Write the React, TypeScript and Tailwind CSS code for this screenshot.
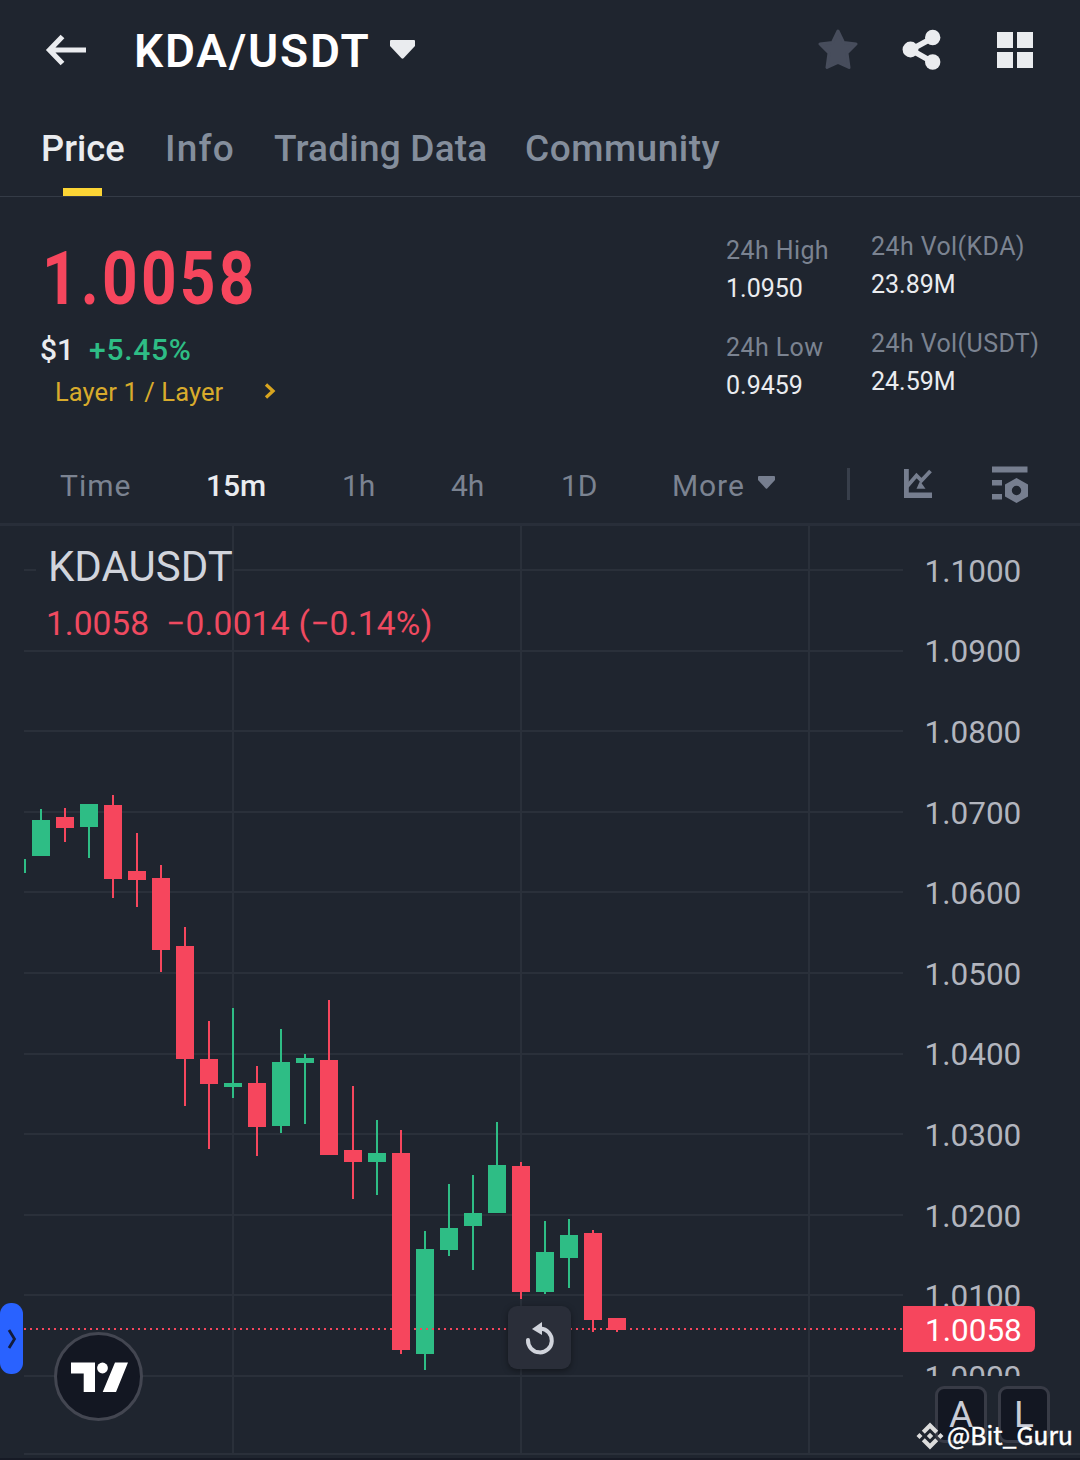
import React from "react";

type Candle = { x: number; high: number; top: number; bottom: number; low: number; up: boolean };

const UP = "#2ebd85";
const DOWN = "#f6465d";

const raw: [number, number, number, number, 0 | 1][] = [
  [809, 820, 856, 856, 1],
  [808, 817, 828, 842, 0],
  [804, 804, 827, 858, 1],
  [795, 805, 879, 898, 0],
  [833, 871, 880, 907, 0],
  [865, 878, 950, 972, 0],
  [927, 946, 1059, 1106, 0],
  [1021, 1059, 1084, 1149, 0],
  [1008, 1083, 1087, 1098, 1],
  [1066, 1083, 1127, 1156, 0],
  [1029, 1062, 1126, 1133, 1],
  [1054, 1058, 1063, 1124, 1],
  [1000, 1060, 1155, 1155, 0],
  [1086, 1150, 1162, 1199, 0],
  [1120, 1153, 1162, 1195, 1],
  [1130, 1153, 1350, 1354, 0],
  [1231, 1249, 1354, 1370, 1],
  [1184, 1228, 1250, 1256, 1],
  [1175, 1213, 1226, 1270, 1],
  [1122, 1165, 1213, 1213, 1],
  [1162, 1166, 1292, 1299, 0],
  [1221, 1252, 1292, 1294, 1],
  [1219, 1235, 1258, 1288, 1],
  [1230, 1233, 1320, 1332, 0],
  [1318, 1318, 1330, 1332, 0],
];

const candles: Candle[] = raw.map(([high, top, bottom, low, up], i) => ({
  x: 41 + i * 24,
  high,
  top,
  bottom,
  low,
  up: up === 1,
}));

// grid line y, label baseline y, label
const levels: [number, number, string][] = [
  [570, 582, "1.1000"],
  [651, 662, "1.0900"],
  [731, 743, "1.0800"],
  [812, 824, "1.0700"],
  [892, 904, "1.0600"],
  [973, 985, "1.0500"],
  [1054, 1065, "1.0400"],
  [1134, 1146, "1.0300"],
  [1215, 1227, "1.0200"],
  [1295, 1307, "1.0100"],
  [1376, 1388, "1.0000"],
];

function Header() {
  return (
    <header className="flex h-[100px] items-center pl-[45px] pr-[47px]">
      <svg width="42" height="34" viewBox="45 33 42 34" fill="none" stroke="#eaecef" strokeWidth="5.2">
        <path d="M86 50H49.5M62.5 36.500L49.500 50L62.5 63.500" />
      </svg>
      <h1 className="ml-[47px] w-[256px] whitespace-nowrap pt-0.5 text-[46px] font-semibold leading-[60px] tracking-[1.8px] text-white">
        KDA/USDT
      </h1>
      <svg width="25" height="19" viewBox="390 40 25 19" className="-mt-px" fill="#eaecef">
        <path d="M391 40H414Q415 40 415 41V46L403.500 58.300Q402.500 59 401.500 58.300L390 46V41Q390 40 391 40Z" />
      </svg>
      <div className="ml-auto flex items-center">
        <svg width="40" height="42" viewBox="818 29 40 42" fill="#474d5c" stroke="#474d5c" strokeWidth="3" strokeLinejoin="round">
          <path d="M838 31L843.500 42.500L856 44L847 53L849 67.500L838 62.500L827 67.500L829 53L820 44L832.500 42.500Z" />
        </svg>
        <svg width="40" height="42" viewBox="901 29 40 42" className="ml-[43px]" fill="#eaecef" stroke="#eaecef">
          <path d="M909.500 50.500L932.500 38M909.500 49L932.500 62" strokeWidth="5.500" />
          <g stroke="none">
            <circle cx="910.500" cy="49.500" r="7.900" />
            <circle cx="932.700" cy="37.500" r="7.700" />
            <circle cx="932.700" cy="62" r="7.700" />
          </g>
        </svg>
        <svg width="36" height="36" viewBox="0 0 36 36" className="ml-[56px]" fill="#eaecef">
          <path d="M0 0H16V16H0ZM20 0H36V16H20ZM0 20H16V36H0ZM20 20H36V36H20Z" />
        </svg>
      </div>
    </header>
  );
}

function Tabs() {
  return (
    <nav className="flex h-[97px] items-start whitespace-nowrap border-b border-[#343b46] pl-[41px] text-[37px] font-medium leading-[97px] text-[#848e9c]">
      <div className="relative w-[124px] text-[#eaecef]">
        <span className="inline-block origin-left scale-x-[.98]">Price</span>
        <span className="absolute left-[22px] top-[88px] h-2 w-[39px] bg-[#fcd535]" />
      </div>
      <div className="w-[109px] tracking-[1.2px]">Info</div>
      <div className="w-[251px] tracking-[0.2px]">Trading Data</div>
      <div className="tracking-[0.5px]">Community</div>
    </nav>
  );
}

function Stat({ label, value }: { label: string; value: string }) {
  return (
    <div className="h-[97px] whitespace-nowrap text-[25px] leading-[38px]">
      <div className="tracking-[0.4px] text-[#7b8391]">{label}</div>
      <div className="text-[#eaecef]">{value}</div>
    </div>
  );
}

function Summary() {
  return (
    <section className="flex h-[251px] justify-between">
      <div className="pl-10">
        <div className="h-[132px] whitespace-nowrap pt-[41px] text-[74.500px] font-bold leading-[81px] tracking-[3.8px] text-[#f6465d]">
          <span className="inline-block origin-left translate-x-[2px] scale-x-[.835]">1.0058</span>
        </div>
        <div className="flex h-[42px] gap-[15px] whitespace-nowrap text-[30px] font-medium leading-[42px]">
          <span className="text-[#eaecef]">$1</span>
          <span className="tracking-[0.7px] text-[#2ebd85]">+5.45%</span>
        </div>
        <div className="flex h-[42px] items-center whitespace-nowrap pl-[15px] text-[25.500px] leading-[42px] tracking-[0.1px] text-[#d8ab2c]">
          <span className="w-[209px]">Layer 1 / Layer</span>
          <svg width="12" height="16" viewBox="0 0 12 16" className="-mt-0.5" fill="none" stroke="#d8a51f" strokeWidth="3.300">
            <path d="M2 1.500L9 8L2 14.500" />
          </svg>
        </div>
      </div>
      <div className="flex">
        <div className="w-[145px] pt-[35px]">
          <Stat label="24h High" value="1.0950" />
          <Stat label="24h Low" value="0.9459" />
        </div>
        <div className="w-[209px] pt-[31px]">
          <Stat label="24h Vol(KDA)" value="23.89M" />
          <Stat label="24h Vol(USDT)" value="24.59M" />
        </div>
      </div>
    </section>
  );
}

function Intervals() {
  return (
    <div className="flex h-[78px] items-start whitespace-nowrap border-b-[3px] border-[#282e39] pl-[60px] text-[30px] leading-[76px] text-[#7b8391]">
      <div className="w-[146px] tracking-[1px]">Time</div>
      <div className="w-[136px] font-medium text-[#eaecef]">15m</div>
      <div className="w-[109px]">1h</div>
      <div className="w-[110px]">4h</div>
      <div className="w-[111px]">1D</div>
      <div className="w-[86px] tracking-[0.9px]">More</div>
      <svg width="17" height="14" viewBox="0 0 17 14" className="mt-[28px]" fill="#767e8f">
        <path d="M1 0H16Q17 0 17 1V4L9.200 12.500Q8.500 13.200 7.800 12.500L0 4V1Q0 0 1 0Z" />
      </svg>
      <span className="ml-[72px] mt-[20px] h-8 w-[3px] bg-[#383f4b]" />
      <svg width="29" height="30" viewBox="904 469 29 30" className="ml-[54px] mt-[21px]" fill="#767e8f">
        <path d="M904 469H908.800V492.500H932V498H904Z" />
        <path d="M907 486.500L916.500 475.500L921.500 480.500L930.500 471" fill="none" stroke="#767e8f" strokeWidth="3.800" />
        <path d="M920 481L925.500 488.800H916.500Z" />
      </svg>
      <svg width="37" height="38" viewBox="992 466 37 38" className="ml-[59px] mt-[18px]" fill="#767e8f">
        <path d="M992 466.500H1027.500V472.500H992ZM992 480H1002V485.500H992ZM992 494H1002V499.500H992Z" />
        <path fillRule="evenodd" d="M1016.500 478L1028 484.500V496.500L1016.500 503L1005 496.500V484.500ZM1016.500 485.800A4.700 4.700 0 1 0 1016.500 495.200A4.700 4.700 0 1 0 1016.500 485.800Z" />
      </svg>
    </div>
  );
}

function Chart() {
  return (
    <section className="relative h-[934px] w-[1080px] overflow-hidden">
      <svg width="1080" height="934" viewBox="0 526 1080 934" className="block" shapeRendering="crispEdges">
        {[233, 521, 809].map((x) => (
          <rect key={x} x={x - 1} y="526" width="2" height="928" fill="#2a303a" />
        ))}
        {levels.map(([y]) => (
          <rect key={y} x="24" y={y - 1} width="879" height="2" fill="#2a303a" />
        ))}
        <rect x="24" y="1453" width="1056" height="2" fill="#2a303a" />
        <rect x="0" y="1458" width="1080" height="2" fill="#161a25" />
        <rect x="36" y="560" width="196" height="20" fill="#1f252f" />
        <rect x="24" y="859" width="2" height="14" fill={UP} />
        {candles.map((c) => (
          <g key={c.x} fill={c.up ? UP : DOWN}>
            <rect x={c.x - 1} y={c.high} width="2" height={c.low - c.high} />
            <rect x={c.x - 9} y={c.top} width="18" height={c.bottom - c.top} />
          </g>
        ))}
        <path d="M24 1329H903" stroke={DOWN} strokeWidth="2" strokeDasharray="2 4" />
        <g fontSize="31.500" fill="#b2b5be">
          {levels.map(([, base, label]) => (
            <text key={label} x="924.500" y={base}>{label}</text>
          ))}
        </g>
        <rect x="905" y="1376" width="175" height="60" fill="#1f252f" />
        <path d="M903 1306H1029Q1035 1306 1035 1312V1346Q1035 1352 1029 1352H903Z" fill={DOWN} shapeRendering="auto" />
        <text x="925" y="1341" fontSize="31.500" fill="#fff">1.0058</text>
      </svg>

      <div className="absolute left-[47px] top-[14px] whitespace-nowrap">
        <div className="pl-px text-[42px] leading-[54px] text-[#d1d4dc]">KDAUSDT</div>
        <div className="-ml-px flex gap-[17px] text-[33.500px] leading-[60px] text-[#ef4a60]">
          <span>1.0058</span>
          <span className="tracking-[0.25px]">−0.0014 (−0.14%)</span>
        </div>
      </div>

      <div className="absolute left-0 top-[777px] flex h-[71px] w-[23px] items-center justify-center rounded-[11px] bg-[#2962ff]">
        <svg width="10" height="20" viewBox="0 0 10 20" fill="none" stroke="#131c3c" strokeWidth="2.800">
          <path d="M2 1L7.500 10L2 19" />
        </svg>
      </div>

      <div className="absolute left-[54px] top-[806px] flex size-[89px] items-center justify-center rounded-full border-[3px] border-[#434651] bg-[#131722]">
        <svg width="58" height="31" viewBox="70 1363 58 31" className="mt-0.5" fill="#fff">
          <path d="M71 1363.500H95V1393H83.700V1374.500H71ZM115 1363.500H128L116 1393H102.700Z" />
          <circle cx="102.500" cy="1369" r="5.400" />
        </svg>
      </div>

      <div className="absolute left-[508px] top-[780px] flex size-[63px] items-center justify-center rounded-[9px] bg-[#2a2e39] shadow-[0_2px_6px_rgba(0,0,0,0.4)]">
        <svg width="30" height="34" viewBox="525 1321 30 34" fill="none" stroke="#d1d4dc" strokeWidth="4">
          <path d="M528 1340A11.900 11.900 0 1 0 540.500 1328.600" strokeLinecap="round" />
          <path d="M532 1329L542 1322V1335Z" fill="#d1d4dc" stroke="none" />
        </svg>
      </div>

      <div className="absolute left-[935px] top-[860px] flex gap-[11px] text-[37px] leading-[51px] text-[#c9ccd6]">
        <div className="h-[57px] w-[52px] rounded-[9px] border-[3px] border-[#383b46] bg-[#131722] text-center">A</div>
        <div className="h-[57px] w-[52px] rounded-[9px] border-[3px] border-[#383b46] bg-[#131722] text-center">L</div>
      </div>

      <div className="absolute left-[916px] top-[896px] flex items-center whitespace-nowrap">
        <svg width="28" height="28" viewBox="0 0 28 28" fill="#dcdcdc">
          <path d="M14 .5L22.200 8.700L19.200 11.700L14 6.500L8.800 11.700L5.800 8.700ZM14 27.500L22.200 19.300L19.200 16.300L14 21.500L8.800 16.300L5.800 19.300ZM3.500 11L6.500 14L3.500 17L.5 14ZM24.500 11L27.500 14L24.500 17L21.500 14ZM14 10.800L17.200 14L14 17.200L10.800 14Z" />
        </svg>
        <span className="-mt-0.5 ml-[3px] font-['Noto_Sans_CJK_SC','Noto_Sans',sans-serif] text-[24.500px] font-normal leading-[28px] tracking-[0.1px] text-white [-webkit-text-stroke:0.5px_white]">@Bit_Guru</span>
      </div>
    </section>
  );
}

export default function App() {
  return (
    <main className="flex h-[1460px] w-[1080px] flex-col overflow-hidden bg-[#1f252f] font-[Roboto,sans-serif]">
      <Header />
      <Tabs />
      <Summary />
      <Intervals />
      <Chart />
    </main>
  );
}
